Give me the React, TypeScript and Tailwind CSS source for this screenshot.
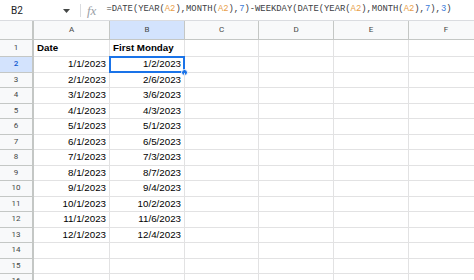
const cols = ["A", "B", "C", "D", "E", "F"];

const data: [string, string][] = [
  ["1/1/2023", "1/2/2023"],
  ["2/1/2023", "2/6/2023"],
  ["3/1/2023", "3/6/2023"],
  ["4/1/2023", "4/3/2023"],
  ["5/1/2023", "5/1/2023"],
  ["6/1/2023", "6/5/2023"],
  ["7/1/2023", "7/3/2023"],
  ["8/1/2023", "8/7/2023"],
  ["9/1/2023", "9/4/2023"],
  ["10/1/2023", "10/2/2023"],
  ["11/1/2023", "11/6/2023"],
  ["12/1/2023", "12/4/2023"],
  ["", ""],
  ["", ""],
  ["", ""],
];

const gridCols = "grid grid-cols-[34px_76px_75px_74px_75px_75px_75px]";
const cell = "border-r border-b border-[#e2e2e3] overflow-hidden whitespace-nowrap";

function Formula() {
  const ref = "text-[#e8a04a]";
  const num = "text-[#3d7bd8]";
  return (
    <span className="font-['Liberation_Mono',monospace] text-[8.85px] text-[#3c4043]">
      =DATE(YEAR(<span className={ref}>A2</span>),MONTH(<span className={ref}>A2</span>),<span className={num}>7</span>)-WEEKDAY(DATE(YEAR(<span className={ref}>A2</span>),MONTH(<span className={ref}>A2</span>),<span className={num}>7</span>),<span className={num}>3</span>)
    </span>
  );
}

export default function App() {
  return (
    <div className="w-[474px] h-[280px] overflow-hidden bg-white font-['Liberation_Sans',Arial,sans-serif]">
      {/* formula bar */}
      <div className="h-[21px] flex items-center border-b border-[#dadce0] bg-white">
        <div className="w-[80px] pl-[11px] flex items-center justify-between pr-[10px] text-[10px] text-[#202124] font-['Roboto',sans-serif]">
          <span>B2</span>
          <svg width="7" height="4" viewBox="0 0 7 4" className="mt-[1px]">
            <path d="M0 0 L7 0 L3.5 4 Z" fill="#444746" />
          </svg>
        </div>
        <div className="w-px h-[13px] bg-[#dadce0]" />
        <span className="ml-[6px] mr-[10px] text-[13px] italic text-[#9aa0a6] font-['Liberation_Serif',serif] leading-none">
          fx
        </span>
        <Formula />
      </div>

      {/* column headers */}
      <div className={`${gridCols} h-[19px] bg-[#f8f9fa] font-['Roboto',sans-serif] text-[8px] text-[#444746]`}>
        <div className="border-r-2 border-b border-[#c4c7c5]" />
        {cols.map((c) => (
          <div
            key={c}
            className={`flex items-center justify-center border-r border-b border-[#c4c7c5] ${
              c === "B" ? "bg-[#d3e3fd]" : ""
            }`}
          >
            {c}
          </div>
        ))}
      </div>

      {/* row 1 */}
      <div className={`${gridCols} h-[17px] text-[9.75px] text-black`}>
        <div className="flex items-center justify-center border-r-2 border-b border-[#c4c7c5] bg-[#f8f9fa] text-[8px] text-[#444746] font-['Roboto',sans-serif]">
          1
        </div>
        <div className={`${cell} flex items-center pl-[3px] font-bold`}>Date</div>
        <div className={`${cell} flex items-center pl-[3px] font-bold`}>First Monday</div>
        <div className={cell} />
        <div className={cell} />
        <div className={cell} />
        <div className={cell} />
      </div>

      {data.map(([a, b], i) => {
        const row = i + 2;
        const sel = row === 2;
        return (
          <div key={row} className={`${gridCols} h-[15.5px] text-[9.75px] text-black`}>
            <div
              className={`flex items-center justify-center border-r-2 border-b border-[#c4c7c5] text-[8px] font-['Roboto',sans-serif] ${
                sel ? "bg-[#d3e3fd] text-[#0b57d0] font-medium" : "bg-[#f8f9fa] text-[#444746]"
              }`}
            >
              {row}
            </div>
            <div className={`${cell} flex items-center justify-end pr-[3px]`}>{a}</div>
            <div className={`${cell} relative flex items-center justify-end pr-[3px] overflow-visible`}>
              {b}
              {sel && (
                <>
                  <div className="absolute -left-px -top-px right-[-1px] bottom-[-1px] border-2 border-[#1a73e8] pointer-events-none" />
                  <div className="absolute right-[-4px] bottom-[-4px] w-[7px] h-[7px] rounded-full bg-[#1a73e8] border border-white" />
                </>
              )}
            </div>
            <div className={cell} />
            <div className={cell} />
            <div className={cell} />
            <div className={cell} />
          </div>
        );
      })}
    </div>
  );
}
